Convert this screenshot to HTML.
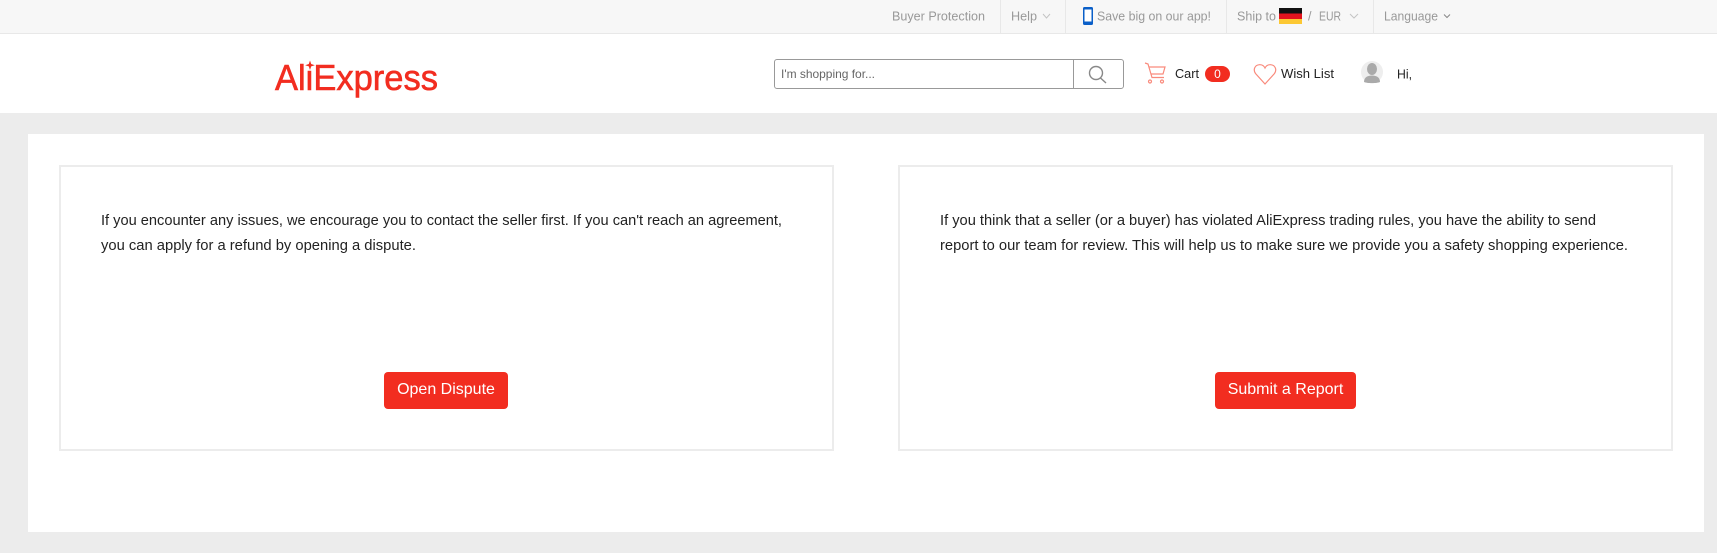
<!DOCTYPE html>
<html lang="en">
<head>
<meta charset="utf-8">
<title>AliExpress</title>
<style>
html,body{margin:0;padding:0;width:1717px;height:553px;overflow:hidden;background:#ececec;font-family:"Liberation Sans",Arial,sans-serif}
.abs{position:absolute;box-sizing:border-box}
#top{left:0;top:0;width:1717px;height:34px;background:#f7f7f7;border-bottom:1px solid #e8e8e8}
.sep{top:0;width:1px;height:33px;background:#e8e8e8}
#head{left:0;top:34px;width:1717px;height:79px;background:#fff}
#panel{left:28px;top:134px;width:1676px;height:398px;background:#fff}
.box{top:165px;width:775px;height:286px;border:2px solid #ececec;background:#fff}
#search{left:774px;top:59px;width:350px;height:30px;border:1px solid #999;border-radius:3px;background:#fff}
#searchsep{left:1073px;top:59px;width:1px;height:30px;background:#999}
.btn{top:372px;height:37px;background:#f22d20;border-radius:4px;color:#fff;font-size:16px;line-height:36px;text-align:center;text-decoration:none}
svg{position:absolute;left:0;top:0}
.t{font-family:"Liberation Sans",Arial,sans-serif}
.tb{font-size:12.5px;fill:#999}
.bd{font-size:15px;fill:#222}
.hd{font-size:13px;fill:#222}
</style>
</head>
<body>
<div class="abs" id="top"></div>
<div class="abs sep" style="left:1000px"></div>
<div class="abs sep" style="left:1065px"></div>
<div class="abs sep" style="left:1226px"></div>
<div class="abs sep" style="left:1373px"></div>
<div class="abs" id="head"></div>
<div class="abs" id="panel"></div>
<div class="abs box" style="left:59px"></div>
<div class="abs box" style="left:898px"></div>
<div class="abs" id="search"></div>
<div class="abs" id="searchsep"></div>
<a class="abs btn" style="left:384px;width:124px">Open Dispute</a>
<a class="abs btn" style="left:1215px;width:141px">Submit a Report</a>

<svg width="1717" height="553" viewBox="0 0 1717 553" xmlns="http://www.w3.org/2000/svg">
  <!-- top bar -->
  <text class="t tb" x="892" y="20.5" textLength="93" lengthAdjust="spacingAndGlyphs">Buyer Protection</text>
  <text class="t tb" x="1011" y="20.5" textLength="26" lengthAdjust="spacingAndGlyphs">Help</text>
  <polyline points="1043,14 1046.5,18 1050,14" fill="none" stroke="#c4c4c4" stroke-width="1"/>
  <rect x="1083" y="7" width="10" height="18" rx="1.5" fill="#0a5fc8"/>
  <rect x="1084.5" y="9.5" width="7" height="12" fill="#fff"/>
  <text class="t tb" x="1097" y="20.5" textLength="114" lengthAdjust="spacingAndGlyphs">Save big on our app!</text>
  <text class="t tb" x="1237" y="20.5" textLength="39" lengthAdjust="spacingAndGlyphs">Ship to</text>
  <rect x="1279" y="8" width="23" height="5.5" fill="#111"/>
  <rect x="1279" y="13.5" width="23" height="5.5" fill="#e3141e"/>
  <rect x="1279" y="19" width="23" height="5" fill="#fcc833"/>
  <text class="t tb" x="1308" y="20.5">/</text>
  <text class="t tb" x="1319" y="20.5" textLength="22" lengthAdjust="spacingAndGlyphs">EUR</text>
  <polyline points="1350,14 1354,18 1358,14" fill="none" stroke="#c4c4c4" stroke-width="1"/>
  <text class="t tb" x="1384" y="20.5" textLength="54" lengthAdjust="spacingAndGlyphs">Language</text>
  <polyline points="1444,14.5 1447,17.5 1450,14.5" fill="none" stroke="#888" stroke-width="1"/>

  <!-- logo -->
  <text class="t" x="275" y="90" font-size="36" fill="#f22d20" stroke="#f22d20" stroke-width="0.6" textLength="163" lengthAdjust="spacingAndGlyphs">AliExpress</text>
  <rect x="305" y="59" width="10" height="9" fill="#fff"/>
  <path d="M310 60.5 L311.2 64 L314.8 65.2 L311.2 66.4 L310 70 L308.8 66.4 L305.2 65.2 L308.8 64 Z" fill="#f22d20"/>

  <!-- search -->
  <text class="t" x="781" y="78" font-size="12" fill="#666" textLength="94">I'm shopping for...</text>
  <circle cx="1096" cy="73" r="6.5" fill="none" stroke="#888" stroke-width="1.4"/>
  <line x1="1100.5" y1="78" x2="1106" y2="83" stroke="#888" stroke-width="1.4"/>

  <!-- cart -->
  <g fill="none" stroke="#f98a7c" stroke-width="1.2">
    <path d="M1145 63 L1148 64 L1152 77.5 L1164 77.5"/>
    <path d="M1148.5 67 L1165 67 L1163 74 L1150.5 74"/>
    <circle cx="1150" cy="81.5" r="1.5"/>
    <circle cx="1162" cy="81.5" r="1.5"/>
  </g>
  <text class="t hd" x="1175" y="78" textLength="24" lengthAdjust="spacingAndGlyphs">Cart</text>
  <rect x="1205" y="66" width="25" height="16" rx="8" fill="#f22d20"/>
  <text class="t" x="1217.5" y="78" font-size="12" fill="#fff" text-anchor="middle">0</text>

  <!-- wish list -->
  <path d="M1265 84 L1255.5 73.5 C1253 70 1254.5 65 1259.5 64.7 C1262 64.6 1264 66 1265 68 C1266 66 1268 64.6 1270.5 64.7 C1275.5 65 1277 70 1274.5 73.5 Z" fill="none" stroke="#f98a7c" stroke-width="1.2"/>
  <text class="t hd" x="1281" y="78" textLength="53" lengthAdjust="spacingAndGlyphs">Wish List</text>

  <!-- avatar -->
  <circle cx="1372" cy="72" r="11" fill="#eee"/>
  <ellipse cx="1372" cy="69" rx="5" ry="6" fill="#aaa"/>
  <path d="M1364 82 C1364 77 1368 75.5 1372 75.5 C1376 75.5 1380 77 1380 82 C1377 83.5 1367 83.5 1364 82 Z" fill="#aaa"/>
  <text class="t hd" x="1397" y="78.5" textLength="15" lengthAdjust="spacingAndGlyphs">Hi,</text>

  <!-- body copy -->
  <text class="t bd" x="101" y="225" textLength="681" lengthAdjust="spacingAndGlyphs">If you encounter any issues, we encourage you to contact the seller first. If you can't reach an agreement,</text>
  <text class="t bd" x="101" y="250" textLength="315" lengthAdjust="spacingAndGlyphs">you can apply for a refund by opening a dispute.</text>
  <text class="t bd" x="940" y="225" textLength="656" lengthAdjust="spacingAndGlyphs">If you think that a seller (or a buyer) has violated AliExpress trading rules, you have the ability to send</text>
  <text class="t bd" x="940" y="250" textLength="688" lengthAdjust="spacingAndGlyphs">report to our team for review. This will help us to make sure we provide you a safety shopping experience.</text>
</svg>
</body>
</html>
